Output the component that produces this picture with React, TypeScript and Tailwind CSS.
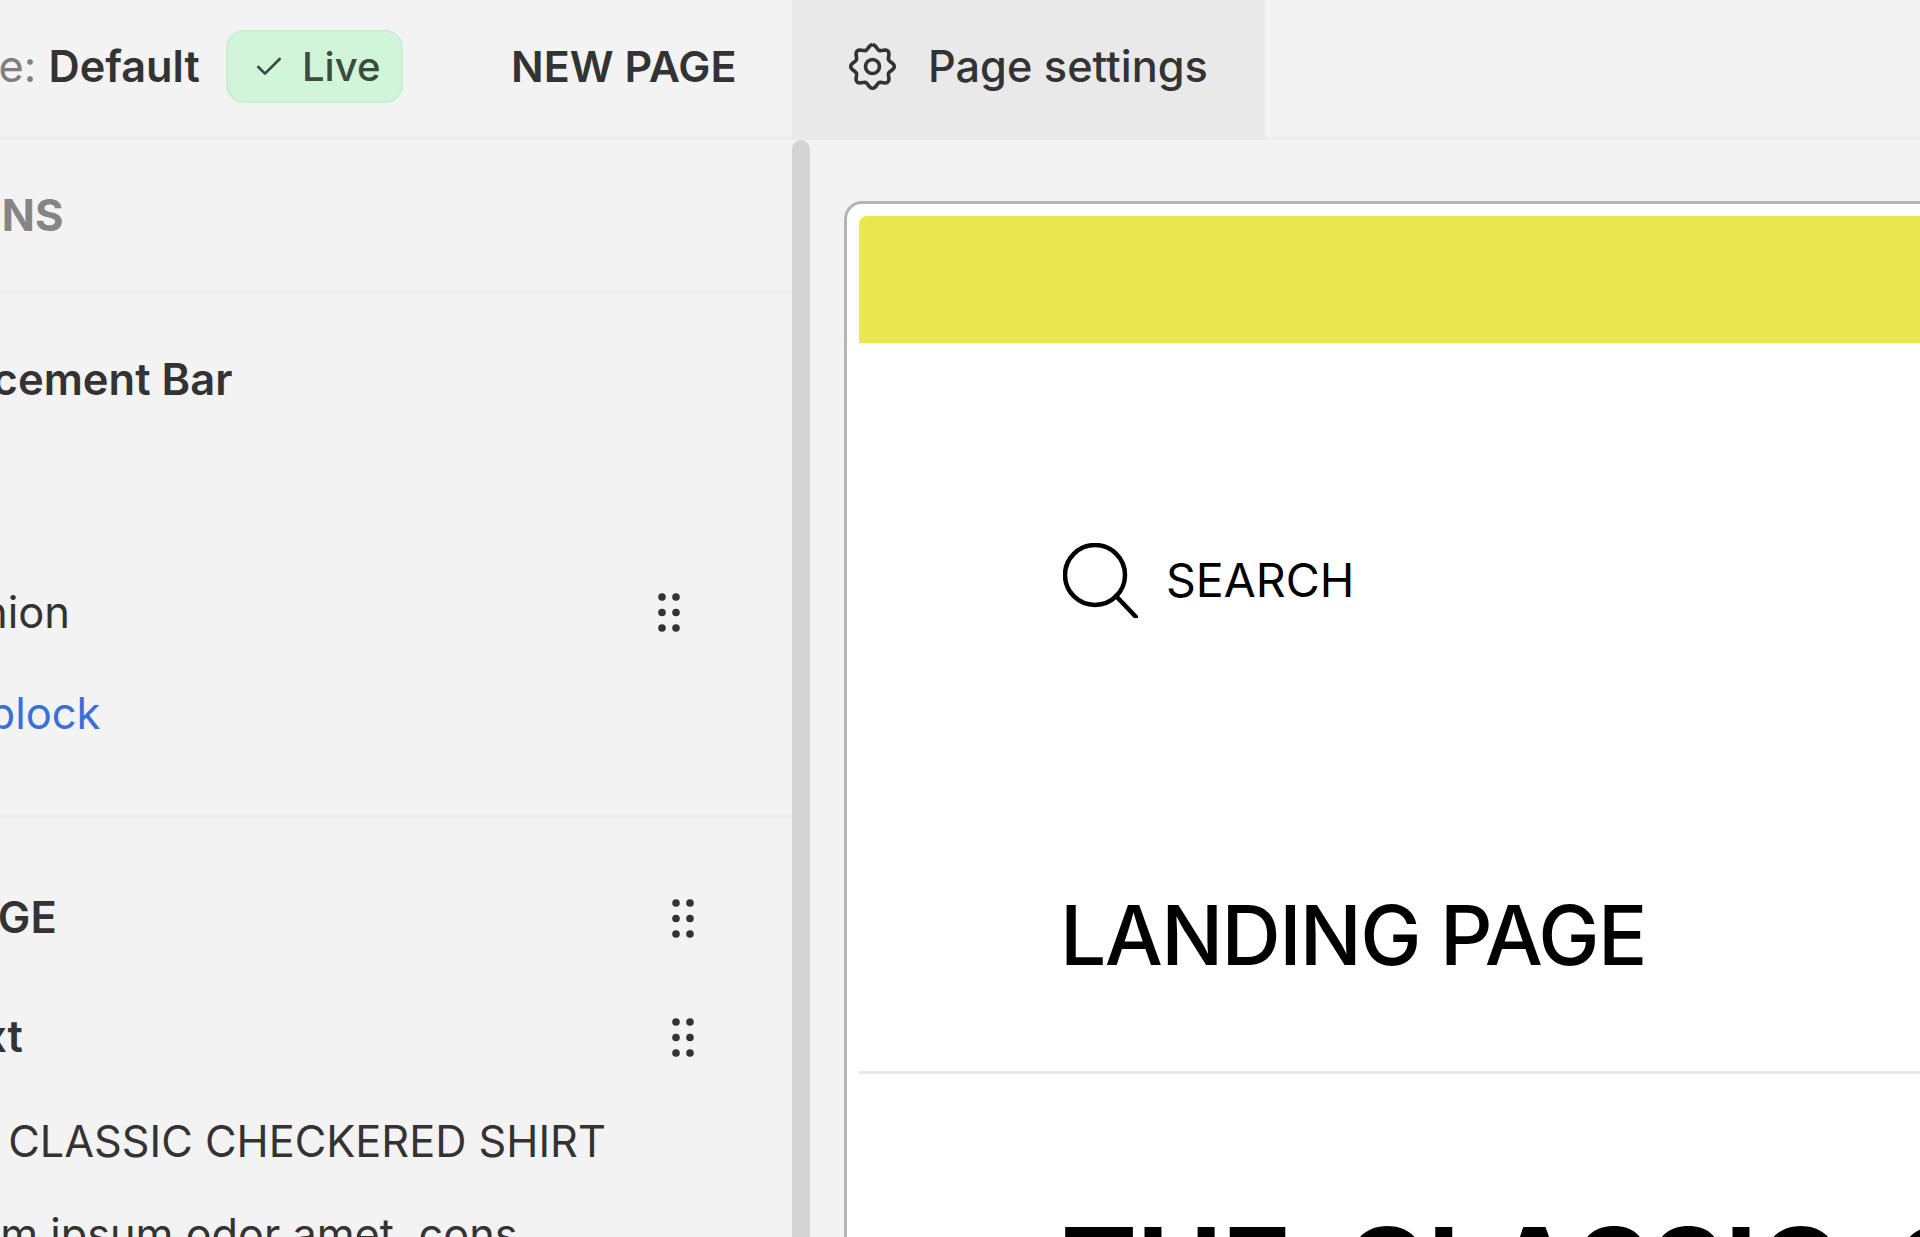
import { Check } from "lucide-react";

const font = "font-['Inter',sans-serif]";

// wavy cog outline, eight lobes
const gearPath = Array.from({ length: 97 }, (_, i) => {
    const a = (i / 96) * Math.PI * 2;
    const r = 19.6 + 2.2 * Math.cos(8 * a);
    const x = 23.5 + r * Math.sin(a);
    const y = 23.5 - r * Math.cos(a);
    return `${i === 0 ? "M" : "L"}${x.toFixed(2)} ${y.toFixed(2)}`;
}).join(" ");

// six dot drag handle
function DragHandle() {
    return (
        <svg width="22" height="39" viewBox="0 0 22 39" className="shrink-0" fill="#333333">
            <circle cx="4" cy="4" r="3.8" />
            <circle cx="18" cy="4" r="3.8" />
            <circle cx="4" cy="19.5" r="3.8" />
            <circle cx="18" cy="19.5" r="3.8" />
            <circle cx="4" cy="35" r="3.8" />
            <circle cx="18" cy="35" r="3.8" />
        </svg>
    );
}

function Gear() {
    return (
        <svg width="47" height="47" viewBox="0 0 47 47" fill="none" stroke="#333333" strokeWidth="3.6" strokeLinejoin="round" className="shrink-0">
            <path d={gearPath} />
            <circle cx="23.5" cy="23.5" r="7" />
        </svg>
    );
}

function SearchIcon() {
    return (
        <svg width="75" height="75" viewBox="0 0 75 75" fill="none" stroke="#000000" strokeWidth="4.5" strokeLinecap="round" className="shrink-0">
            <circle cx="32" cy="32" r="30" />
            <line x1="53" y1="53" x2="73" y2="74" />
        </svg>
    );
}

export default function App() {
    return (
        <div className={`${font} h-[1237px] w-[1920px] overflow-hidden bg-[#f3f3f3] flex flex-col text-[#333333]`}>
            <header className="h-[140px] shrink-0 flex border-b-[3px] border-[#ececec]">
                <div className="w-[792px] shrink-0 flex items-center overflow-hidden pb-[4px]">
                    <div className="ml-[-118px] text-[43.25px] whitespace-nowrap shrink-0 w-[317px]">
                        <span className="text-[#7f7f7f]">Theme: </span>
                        <span className="font-semibold">Default</span>
                    </div>
                    <div className="ml-[27px] shrink-0 w-[177px] h-[73px] rounded-[18px] bg-[#d0f5d9] border-2 border-[#c6f0d0] flex items-center pl-[25px] gap-[17px] text-[40px] font-medium text-[#3d4a40]">
                        <Check size={32} strokeWidth={2} />
                        <span>Live</span>
                    </div>
                    <div className="ml-[108px] shrink-0 text-[43px] font-semibold whitespace-nowrap">NEW PAGE</div>
                </div>
                <div className="w-[473px] h-[140px] shrink-0 bg-[#e9e9e9] flex items-center pl-[57px] pb-[7px] gap-[32px] text-[43.25px] font-medium whitespace-nowrap">
                    <Gear />
                    <span>Page settings</span>
                </div>
            </header>

            <div className="flex-1 flex min-h-0">
                <aside className="w-[792px] shrink-0 overflow-hidden">
                    <div className="h-[153px] flex items-center border-b-[3px] border-[#ececec] pt-[2px]">
                        <span className="ml-[-160px] text-[43.5px] font-bold text-[#858585] whitespace-nowrap">SECTIONS</span>
                    </div>
                    <div className="h-[525px] border-b-[3px] border-[#ececec] pt-[54px]">
                        <div className="ml-[-172px] text-[43.5px] font-semibold whitespace-nowrap">Announcement Bar</div>
                        <div className="mt-[176px] h-[48px] flex items-center">
                            <span className="ml-[-90px] w-[748px] shrink-0 text-[43.5px] whitespace-nowrap">Fashion</span>
                            <DragHandle />
                        </div>
                        <div className="mt-[45px] ml-[-107px] text-[43.5px] text-[#3a6fd8] whitespace-nowrap">Add block</div>
                    </div>
                    <div className="pt-[76px]">
                        <div className="h-[48px] flex items-center">
                            <span className="ml-[-266px] w-[938px] shrink-0 text-[43.5px] font-semibold whitespace-nowrap">LANDING PAGE</span>
                            <DragHandle />
                        </div>
                        <div className="mt-[71px] h-[48px] flex items-center">
                            <span className="ml-[-68px] w-[740px] shrink-0 text-[43.5px] font-semibold whitespace-nowrap">Text</span>
                            <DragHandle />
                        </div>
                        <div className="mt-[48px] ml-[-90px] text-[43.25px] whitespace-nowrap">THE CLASSIC CHECKERED SHIRT</div>
                        <div className="mt-[28px] ml-[-91px] text-[43.25px] whitespace-nowrap">Lorem ipsum odor amet, cons</div>
                    </div>
                </aside>

                <div className="w-[18px] shrink-0 bg-[#d4d4d4] rounded-t-[9px]" />

                <main className="flex-1 min-w-0 pl-[34px] pt-[61px] overflow-hidden">
                    <div className="w-[1200px] h-[1200px] bg-white border-[3px] border-[#b5b5b5] rounded-[18px] p-[12px]">
                        <div className="h-[127px] bg-[#eae84f] rounded-t-[8px]" />
                        <div className="h-[731px] border-b-[3px] border-[#e8e8e8] pl-[204px] pt-[200px]">
                            <div className="flex items-center gap-[28px] text-[46.5px] text-black">
                                <SearchIcon />
                                <span>SEARCH</span>
                            </div>
                            <div className="mt-[277px] ml-[-3px] text-[82px] font-[450] tracking-[-0.02em] text-black leading-none whitespace-nowrap">LANDING PAGE</div>
                        </div>
                        <div className="pl-[202px] pt-[138px] text-[114px] [word-spacing:25px] font-bold text-black leading-none whitespace-nowrap">THE CLASSIC CHECKERED SHIRT</div>
                    </div>
                </main>
            </div>
        </div>
    );
}
